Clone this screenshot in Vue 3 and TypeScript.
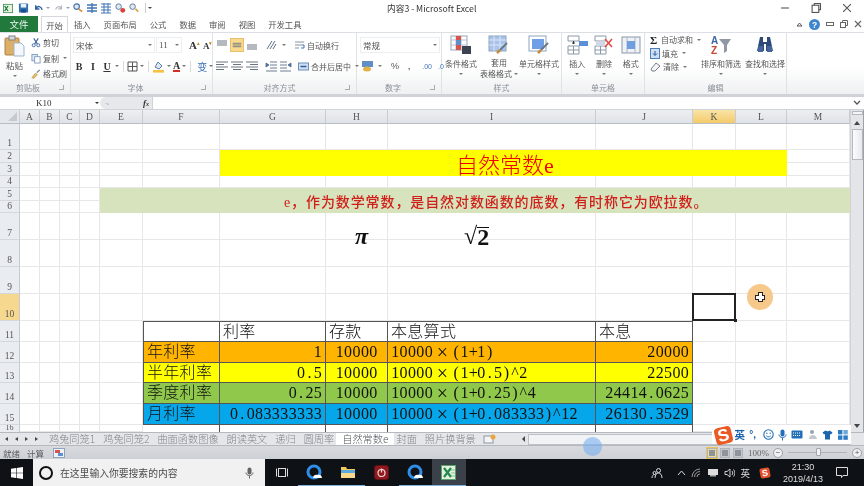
<script setup lang="ts">
const cols = ['A', 'B', 'C', 'D', 'E', 'F', 'G', 'H', 'I', 'J', 'K', 'L', 'M']
const rows = Array.from({ length: 16 }, (_, i) => i + 1)

const tabs = ['插入', '页面布局', '公式', '数据', '审阅', '视图', '开发工具']
const sheets = ['鸡兔同笼1', '鸡兔同笼2', '曲面函数图像', '朗读英文', '递归', '圆周率', '自然常数e', '封面', '照片换背景']

type Cell = { r: number; c: number; text: string; cls: string }
const tableRows = [
  { name: '', bg: 'white', vals: ['利率', '存款', '本息算式', '本息'] },
  { name: '年利率', bg: 'orange', vals: ['1', '10000', '10000×(1+1)', '20000'] },
  { name: '半年利率', bg: 'yellow', vals: ['0.5', '10000', '10000×(1+0.5)^2', '22500'] },
  { name: '季度利率', bg: 'green', vals: ['0.25', '10000', '10000×(1+0.25)^4', '24414.0625'] },
  { name: '月利率', bg: 'blue', vals: ['0.083333333', '10000', '10000×(1+0.083333)^12', '26130.3529'] },
]
const tableCells: Cell[] = []
tableRows.forEach((row, i) => {
  const base = `tc ${row.bg}`
  tableCells.push({ r: 11 + i, c: 6, text: row.name, cls: `${base} left cjk first-col` })
  row.vals.forEach((v, j) => {
    const head = i === 0
    const align = head ? 'left cjk' : ['right', 'center', 'left', 'right'][j]
    tableCells.push({ r: 11 + i, c: 7 + j, text: v, cls: `${base} ${align}` })
  })
})

// SimSun is half-width for every ascii char, so numbers go char by char
function parts(text: string) {
  return /[\u4e00-\u9fff]/.test(text) ? [text] : Array.from(text)
}
function partClass(p: string) {
  return { ch: p.length === 1 && p !== '×', times: p === '×' }
}

const alignTop = ['M2 3h10M2 5h10M2 7h10', 'M2 5h10M2 7h10M2 9h10', 'M2 7h10M2 9h10M2 11h10']
const horizontal = [
  [[1, 13], [1, 9], [1, 13], [1, 9]],
  [[1, 13], [3, 11], [1, 13], [3, 11]],
  [[1, 13], [5, 13], [1, 13], [5, 13]],
]
</script>

<template>
  <div class="excel">
    <!-- title bar -->
    <div class="titlebar">
      <div class="qat">
        <svg width="10" height="11" viewBox="0 0 12 12"><rect x=".5" y="1" width="11" height="10" fill="#e6f1e4" stroke="#3f8f4f" /><path d="M2 3l4 6M6 3L2 9" stroke="#1f7a3a" stroke-width="1.5" /></svg>
        <svg class="save" width="11" height="12" viewBox="0 0 12 12"><rect x="1" y="1" width="10" height="10" rx="1" fill="#2f6fb0" /><rect x="3" y="1.5" width="6" height="4" fill="#e9f0f8" /><rect x="3.5" y="7.5" width="5" height="3.5" fill="#1c4a80" /></svg>
        <svg class="undo" width="11" height="12" viewBox="0 0 12 12"><path d="M3 3v4h4M3 7c2-4 6-3 7 1" fill="none" stroke="#2f5f9a" stroke-width="1.6" /></svg>
        <i class="mini-arrow"></i>
        <svg class="redo" width="10" height="12" viewBox="0 0 12 12"><path d="M9 3v4H5M9 7C7 3 3 4 2 8" fill="none" stroke="#b4bac2" stroke-width="1.5" /></svg>
        <i class="mini-arrow"></i>
        <svg width="12" height="12" viewBox="0 0 13 12"><circle cx="5" cy="4.5" r="3" fill="#dfe9f5" stroke="#3e6da5" stroke-width="1.2" /><path d="M7 7l4 3" stroke="#d28b2f" stroke-width="1.6" /></svg>
        <svg width="12" height="12" viewBox="0 0 12 12"><path d="M1 3h10M1 6h10M1 9h10M6 1v10" stroke="#3f74b5" stroke-width="1.3" /></svg>
        <svg width="12" height="12" viewBox="0 0 12 12"><path d="M1 2h10M1 5h10M1 8h10M1 11h10M4 1v10M8 1v10" stroke="#3f74b5" /></svg>
        <svg width="12" height="12" viewBox="0 0 13 12"><circle cx="5" cy="4.5" r="3" fill="#e3e8ef" stroke="#56789f" /><circle cx="9.5" cy="8.5" r="2.6" fill="#d8423a" /></svg>
        <svg width="12" height="12" viewBox="0 0 13 12"><circle cx="5" cy="4.5" r="3" fill="#e3e8ef" stroke="#56789f" /><path d="M8 7l3 3" stroke="#d9a640" stroke-width="1.8" /></svg>
        <span class="sep"></span>
        <i class="mini-arrow dark"></i>
      </div>
      <div class="doc-title">内容3 - Microsoft Excel</div>
      <div class="win-controls">
        <svg width="10" height="10" viewBox="0 0 9 9"><path d="M1 4.5h7" stroke="#555" /></svg>
        <svg width="10" height="10" viewBox="0 0 9 9"><rect x="1" y="2" width="6" height="6.5" fill="none" stroke="#555" /><path d="M3 2V.5h5.5V6H7" fill="none" stroke="#555" /></svg>
        <svg width="10" height="10" viewBox="0 0 9 9"><path d="M1 1l7 7M8 1L1 8" stroke="#555" /></svg>
      </div>
    </div>

    <!-- ribbon tabs -->
    <div class="tabbar">
      <div class="file-tab">文件</div>
      <div class="tab active">开始</div>
      <div v-for="t in tabs" :key="t" class="tab">{{ t }}</div>
      <div class="doc-controls">
        <svg width="7" height="7" viewBox="0 0 7 7"><path d="M1 5l2.5-3L6 5z" fill="none" stroke="#555" /></svg>
        <svg width="11" height="11" viewBox="0 0 11 11"><circle cx="5.5" cy="5.5" r="5.5" fill="#3d86cf" /><text x="5.5" y="8.5" font-size="8.5" font-weight="700" text-anchor="middle" fill="#fff" font-family="Liberation Sans, sans-serif">?</text></svg>
        <svg width="8" height="6" viewBox="0 0 8 6"><rect x=".5" y="1.5" width="7" height="3" fill="none" stroke="#666" /></svg>
        <svg width="8" height="8" viewBox="0 0 8 8"><rect x=".5" y="2.5" width="5" height="5" fill="#fff" stroke="#666" /><path d="M2.5 2V.5h5v5H6" fill="none" stroke="#666" /></svg>
        <svg width="8" height="8" viewBox="0 0 8 8"><path d="M1 1l6 6M7 1L1 7" stroke="#666" stroke-width="1.2" /></svg>
      </div>
    </div>

    <!-- ribbon -->
    <div class="ribbon">
      <section class="group clipboard">
        <div class="body">
          <div class="big paste">
            <svg width="22" height="22" viewBox="0 0 22 22"><rect x="1" y="3" width="14" height="17" rx="1" fill="#dcae66" stroke="#ad8444" /><rect x="5" y="1" width="6" height="4" fill="#d5d8dd" stroke="#7d8187" /><path d="M10 8h7l3 3v10H10z" fill="#f4f8fc" stroke="#9fb5cf" /></svg>
            <span>粘贴</span>
            <i class="arrow"></i>
          </div>
          <div class="clip-list">
            <div class="small"><svg width="10" height="11" viewBox="0 0 11 11"><path d="M3 1l4 6M8 1L4 7" stroke="#3c66a0" stroke-width="1.2" /><circle cx="3" cy="8.5" r="1.7" fill="none" stroke="#3c66a0" /><circle cx="8" cy="8.5" r="1.7" fill="none" stroke="#3c66a0" /></svg>剪切</div>
            <div class="small"><svg width="10" height="11" viewBox="0 0 11 11"><rect x="1" y="1" width="6" height="7" fill="#dce8f5" stroke="#7d9ac0" /><rect x="4" y="3.5" width="6" height="7" fill="#fff" stroke="#7d9ac0" /></svg>复制<i class="arrow"></i></div>
            <div class="small"><svg width="10" height="11" viewBox="0 0 11 11"><path d="M1 10l4-5 2 2-4 4z" fill="#e7c166" stroke="#a9822e" stroke-width=".6" /><path d="M6 4l3-3 1 1-3 3z" fill="#6d7f97" /></svg>格式刷</div>
          </div>
        </div>
        <div class="label">剪贴板<i class="launcher"></i></div>
      </section>

      <section class="group font">
        <div class="body stack">
          <div class="line">
            <div class="select font-name">宋体<i class="arrow"></i></div>
            <div class="select font-size">11<i class="arrow"></i></div>
            <span class="grow-a">A<sup>▴</sup></span>
            <span class="shrink-a">A<sup>▾</sup></span>
          </div>
          <div class="line format-line">
            <b class="fmt">B</b>
            <em class="fmt">I</em>
            <u class="fmt">U</u><i class="arrow"></i>
            <span class="thin-sep"></span>
            <svg width="11" height="11" viewBox="0 0 11 11"><path d="M1 1h9v9H1zM5.5 1v9M1 5.5h9" fill="none" stroke="#555" /></svg><i class="arrow"></i>
            <span class="thin-sep"></span>
            <svg width="13" height="13" viewBox="0 0 13 13"><path d="M3 7l3-5 4 4-3 3z" fill="#dfe8f2" stroke="#5a7ba6" /><rect x="1" y="10" width="11" height="2.6" fill="#f5c242" /></svg><i class="arrow"></i>
            <span class="color-a">A</span><i class="arrow"></i>
            <span class="thin-sep"></span>
            <span class="phonetic">变</span><i class="arrow"></i>
          </div>
        </div>
        <div class="label">字体<i class="launcher"></i></div>
      </section>

      <section class="group align">
        <div class="body stack">
          <div class="line">
            <svg v-for="(d, i) in alignTop" :key="i" width="14" height="14" viewBox="0 0 14 14" :class="{ picked: i === 1 }">
              <path :d="d" stroke="#6a7480" />
            </svg>
            <svg class="orient" width="14" height="12" viewBox="0 0 14 12"><path d="M2 10l5-8M5 10l5-8M8 10l3-5" stroke="#5d6f88" /></svg><i class="arrow"></i>
            <div class="small wrap"><svg width="11" height="11" viewBox="0 0 11 11"><path d="M1 2h9M1 5h7M1 8h4" stroke="#8a93a0" /><path d="M8 5h2v3H7" fill="none" stroke="#3f74b5" /></svg>自动换行</div>
          </div>
          <div class="line">
            <svg v-for="(h, i) in horizontal" :key="i" width="14" height="12" viewBox="0 0 14 12">
              <line v-for="(l, j) in h" :key="j" :x1="l[0]" :x2="l[1]" :y1="2 + j * 2.5" :y2="2 + j * 2.5" stroke="#6a7480" />
            </svg>
            <svg class="orient" width="13" height="12" viewBox="0 0 13 12"><path d="M5 2h7M5 5h7M5 8h7M1 11h11M4 5L1 3v4z" stroke="#5d6f88" fill="#3f74b5" stroke-width=".9" /></svg>
            <svg width="13" height="12" viewBox="0 0 13 12"><path d="M1 2h7M1 5h7M1 8h7M1 11h11M9 5l3-2v4z" stroke="#5d6f88" fill="#3f74b5" stroke-width=".9" /></svg>
            <div class="small merge"><svg width="11" height="11" viewBox="0 0 11 11"><rect x=".5" y="2" width="10" height="7" fill="#cfe0f3" stroke="#6d8fb8" /><path d="M2.5 5.500h6" stroke="#2a5f9c" stroke-width="1.5" /></svg>合并后居中<i class="arrow"></i></div>
          </div>
        </div>
        <div class="label">对齐方式<i class="launcher"></i></div>
      </section>

      <section class="group number">
        <div class="body stack">
          <div class="line"><div class="select num-format">常规<i class="arrow"></i></div></div>
          <div class="line num-line">
            <svg width="14" height="12" viewBox="0 0 14 12"><rect x="1" y="1" width="11" height="6" fill="#5f8fc6" /><ellipse cx="6" cy="9" rx="4" ry="2.5" fill="#e0b146" /></svg><i class="arrow"></i>
            <span class="pct">%</span>
            <strong>,</strong>
            <span class="dec">.00</span>
            <span class="dec">.0</span>
          </div>
        </div>
        <div class="label">数字<i class="launcher"></i></div>
      </section>

      <section class="group styles">
        <div class="body">
          <div class="big cond">
            <svg width="22" height="20" viewBox="0 0 22 20"><rect x="1" y="1" width="16" height="14" fill="#fff" stroke="#99a6b8" /><path d="M1 5h16M1 10h16M6 1v14M11 1v14" stroke="#b7c1cf" /><rect x="6" y="1" width="5" height="4" fill="#d8544b" /><rect x="6" y="5" width="5" height="5" fill="#5f8fcb" /><rect x="6" y="10" width="5" height="5" fill="#d8544b" /><rect x="12" y="11" width="9" height="8" fill="#3b4350" /></svg>
            <span>条件格式</span>
            <i class="arrow"></i>
          </div>
          <div class="big cond two-line">
            <svg width="22" height="20" viewBox="0 0 22 20"><rect x="1" y="1" width="17" height="15" fill="#a9c3ea" stroke="#8ea3c0" /><path d="M1 5h17M1 10h17M6 1v15M12 1v15" stroke="#dbe6f6" /><path d="M19 8l-7 7" stroke="#6b7887" stroke-width="2" /><path d="M12 15l-3 3" stroke="#c78a3a" stroke-width="2.5" /></svg>
            <span>套用</span>
            <span>表格格式<i class="arrow inline"></i></span>
          </div>
          <div class="big cell-style">
            <svg width="22" height="20" viewBox="0 0 22 20"><rect x="1" y="1" width="17" height="15" fill="#fff" stroke="#8ea3c0" /><rect x="4" y="4" width="12" height="10" fill="#6f9fe6" /><path d="M20 8l-7 7" stroke="#6b7887" stroke-width="2" /><path d="M13 15l-3 3" stroke="#c78a3a" stroke-width="2.5" /></svg>
            <span>单元格样式</span>
            <i class="arrow"></i>
          </div>
        </div>
        <div class="label">样式</div>
      </section>

      <section class="group cells">
        <div class="body">
          <div class="big">
            <svg width="22" height="20" viewBox="0 0 22 20"><path d="M2 1h11v5H2zM2 11h11v8H2zM7.5 11v8M2 15h11" fill="#fff" stroke="#8c98a8" /><path d="M7.5 6v3M6 8h3" stroke="#333" /><rect x="13" y="6" width="9" height="5" fill="#5b8fd6" /></svg>
            <span>插入</span>
            <i class="arrow"></i>
          </div>
          <div class="big">
            <svg width="22" height="20" viewBox="0 0 22 20"><path d="M2 1h11v5H2zM2 11h11v8H2zM7.5 11v8M2 15h11" fill="#fff" stroke="#8c98a8" /><rect x="3" y="6" width="9" height="5" fill="#cfd8e4" /><path d="M12 4l7 8M19 4l-7 8" stroke="#e2483d" stroke-width="1.5" /></svg>
            <span>删除</span>
            <i class="arrow"></i>
          </div>
          <div class="big">
            <svg width="22" height="20" viewBox="0 0 22 20"><rect x="2" y="2" width="18" height="16" fill="#eef2f7" stroke="#8c98a8" /><path d="M7 2v16M15 2v16" stroke="#aab4c2" /><rect x="7" y="6" width="8" height="8" fill="#6f9fe0" /></svg>
            <span>格式</span>
            <i class="arrow"></i>
          </div>
        </div>
        <div class="label">单元格</div>
      </section>

      <section class="group editing">
        <div class="body">
          <div class="edit-list">
            <div class="small"><span class="sigma">Σ</span>自动求和<i class="arrow"></i></div>
            <div class="small"><svg width="10" height="11" viewBox="0 0 10 11"><rect x=".5" y=".5" width="9" height="10" fill="#cfe0f3" stroke="#4d7fbc" /><path d="M5 3v4M3 5.500l2 2 2-2" stroke="#1d4f93" fill="none" /></svg>填充<i class="arrow"></i></div>
            <div class="small"><svg width="11" height="11" viewBox="0 0 11 11"><path d="M1 8l5-6 4 3-5 5H2z" fill="#f4f5f7" stroke="#777f8a" /></svg>清除<i class="arrow"></i></div>
          </div>
          <div class="big sort">
            <svg width="22" height="20" viewBox="0 0 22 20"><text x="1" y="9" font-size="10" font-weight="700" fill="#3a66a8" font-family="Liberation Sans, sans-serif">A</text><text x="1" y="19" font-size="10" font-weight="700" fill="#c2492f" font-family="Liberation Sans, sans-serif">Z</text><path d="M9 4h12l-4 6v6l-3 2v-8z" fill="#8f98a4" /></svg>
            <span>排序和筛选</span>
            <i class="arrow"></i>
          </div>
          <div class="big find">
            <svg width="20" height="20" viewBox="0 0 20 20"><path d="M5 2h3v5h4V2h3l3 14h-7V9H9v7H2z" fill="#2e4a78" /><rect x="3" y="11" width="5" height="6" fill="#43659b" /><rect x="12" y="11" width="5" height="6" fill="#43659b" /></svg>
            <span>查找和选择</span>
            <i class="arrow"></i>
          </div>
        </div>
        <div class="label">编辑</div>
      </section>
    </div>

    <!-- formula bar -->
    <div class="formula">
      <div class="namebox">K10<i class="arrow dark"></i></div>
      <div class="fx-box"><span class="fx-dot">~</span><em>f<small>x</small></em></div>
      <div class="input"></div>
      <svg class="expand" width="8" height="6" viewBox="0 0 8 6"><path d="M1 1l3 3 3-3" fill="none" stroke="#555" stroke-width="1.3" /></svg>
    </div>

    <!-- sheet -->
    <div class="sheet-area">
      <div class="sheet">
        <div class="corner"><i></i></div>
        <div v-for="c in cols" :key="c" class="col-head" :class="{ current: c === 'K' }">{{ c }}</div>
        <template v-for="r in rows" :key="r">
          <div class="row-head" :class="{ current: r === 10, cut: r === 16 }" :style="{ gridRow: r + 1 }">{{ r }}</div>
          <div v-for="(c, i) in cols" :key="c" class="cell" :style="{ gridRow: r + 1, gridColumn: i + 2 }"></div>
        </template>

        <div class="title-cell">自然常数e</div>
        <div class="desc-cell">e，作为数学常数，是自然对数函数的底数，有时称它为欧拉数。</div>
        <div class="pi">π</div>
        <div class="root">√<span>2</span></div>

        <div
          v-for="t in tableCells"
          :key="`${t.r}-${t.c}`"
          :class="t.cls"
          :style="{ gridRow: t.r + 1, gridColumn: t.c + 1 }"
        ><span v-for="(p, i) in parts(t.text)" :key="i" :class="partClass(p)">{{ p }}</span></div>
        <div v-for="c in 5" :key="c" class="tc tail" :style="{ gridRow: 17, gridColumn: c + 6 }"></div>

        <div class="selected"><i></i></div>
      </div>
      <div class="vscroll">
        <span class="splitter"></span>
        <span class="up"></span>
        <span class="thumb"></span>
        <span class="spacer"></span>
        <span class="down"></span>
      </div>
    </div>

    <!-- sheet tabs -->
    <div class="sheetbar">
      <div class="nav-icons">
        <i class="first"></i><i class="prev"></i><i class="next"></i><i class="last"></i>
      </div>
      <div v-for="s in sheets" :key="s" class="sheet-tab" :class="{ on: s === '自然常数e' }">{{ s }}</div>
      <svg class="new-sheet" width="13" height="10" viewBox="0 0 13 10"><rect x="1" y="2" width="9" height="7" fill="#f2f4f7" stroke="#8d97a4" /><circle cx="10" cy="3" r="2.5" fill="#e7a63e" /></svg>
      <div class="hscroll">
        <span class="hs-left"></span>
        <span class="hs-track"></span>
      </div>
    </div>

    <!-- status bar -->
    <div class="statusbar">
      <span>就绪</span>
      <span>计算</span>
      <svg width="12" height="10" viewBox="0 0 12 10"><rect x=".5" y=".5" width="11" height="9" fill="#eef3f9" stroke="#8fa3bd" /><rect x="2" y="2" width="5" height="3" fill="#d8544b" /><rect x="5" y="5" width="5" height="3" fill="#5f8fcb" /></svg>
      <div class="status-right">
        <span class="view on"><i></i></span>
        <span class="view"><i></i></span>
        <span class="view"><i></i></span>
        <span class="zoom-text">100%</span>
        <span class="zoom-btn">−</span>
        <span class="slider"><i></i></span>
        <span class="zoom-btn">+</span>
      </div>
    </div>

    <!-- taskbar -->
    <div class="taskbar">
      <div class="start">
        <svg width="12" height="12" viewBox="0 0 12 12"><path d="M0 1.700l5-.7v4.700H0zM5.600.9L12 0v5.700H5.600zM0 6.300h5V11l-5-.7zM5.600 6.300H12V12l-6.400-.9z" fill="#fff" /></svg>
      </div>
      <div class="search">
        <span class="cortana"></span>
        <span class="search-text">在这里输入你要搜索的内容</span>
        <svg width="9" height="12" viewBox="0 0 9 12"><rect x="2.5" y=".5" width="4" height="7" rx="2" fill="#666" /><path d="M1 5.500c0 4 7 4 7 0M4.500 9v2.500" fill="none" stroke="#666" /></svg>
      </div>
      <div class="task-view">
        <svg width="12" height="11" viewBox="0 0 12 11"><rect x="2.5" y="1.500" width="7" height="8" fill="none" stroke="#ddd" /><path d="M.5 1.500v8M11.500 1.500v8" stroke="#ddd" /></svg>
      </div>
      <div class="apps">
        <div class="app open"><svg width="17" height="17" viewBox="0 0 17 17"><circle cx="8" cy="8" r="6" fill="none" stroke="#2f8fe8" stroke-width="3" /><path d="M7 14c0-3 3-4 5-3 2-1 4 1 4 3z" fill="#fff" /></svg></div>
        <div class="app open"><svg width="16" height="14" viewBox="0 0 16 14"><path d="M1 2h5l1 2h8v9H1z" fill="#f2c75c" /><rect x="1" y="5" width="14" height="3" fill="#5aa9dc" /><rect x="1" y="8" width="14" height="5" fill="#f6d98a" /></svg></div>
        <div class="app"><svg width="15" height="15" viewBox="0 0 15 15"><rect x=".5" y=".5" width="14" height="14" rx="2.5" fill="#8e1a20" stroke="#5e1216" /><circle cx="7.5" cy="8" r="3.5" fill="none" stroke="#f6d9d9" stroke-width="1.2" /><path d="M7.500 3.500v4" stroke="#f6d9d9" stroke-width="1.2" /></svg></div>
        <div class="app open"><svg width="17" height="17" viewBox="0 0 17 17"><circle cx="8" cy="8" r="6" fill="none" stroke="#2f8fe8" stroke-width="3" /><path d="M7 14c0-3 3-4 5-3 2-1 4 1 4 3z" fill="#fff" /></svg></div>
        <div class="app open current"><svg width="15" height="15" viewBox="0 0 15 15"><rect x=".5" y=".5" width="14" height="14" fill="#e4efe2" stroke="#5aa06a" /><path d="M3 3l7 9M10 3l-7 9" stroke="#1f8a45" stroke-width="2.2" /><path d="M10 5h4M10 8h4M10 11h4" stroke="#8bbd96" /></svg></div>
      </div>
      <div class="tray">
        <svg width="12" height="12" viewBox="0 0 12 12"><circle cx="7.5" cy="3.5" r="2" fill="none" stroke="#ddd" /><circle cx="3.5" cy="6" r="1.5" fill="none" stroke="#ddd" /><path d="M4 11c0-3 1.500-5 3.500-5s3.500 2 3.500 5M1 11c0-2 1-3.500 2.500-3.500" fill="none" stroke="#ddd" /></svg>
        <svg class="caret-up" width="9" height="6" viewBox="0 0 9 6"><path d="M1 5l3.500-4L8 5" fill="none" stroke="#ddd" /></svg>
        <svg width="11" height="10" viewBox="0 0 11 10"><path d="M1 9a8 8 0 0 1 8-8M3.500 9A5.500 5.500 0 0 1 9 3.500M6 9a3 3 0 0 1 3-3" fill="none" stroke="#999" /></svg>
        <svg width="12" height="9" viewBox="0 0 12 9"><rect x="1" y="1" width="10" height="6" fill="#ddd" /><rect x="3" y="7" width="6" height="1.5" fill="#aaa" /></svg>
        <svg width="11" height="10" viewBox="0 0 11 10"><path d="M1 3.500h2L6 1v8L3 6.500H1z" fill="none" stroke="#ccc" /><path d="M8 3a3 3 0 0 1 0 4M9.500 1.500a5 5 0 0 1 0 7" fill="none" stroke="#ccc" /></svg>
        <span class="ime">英</span>
        <span class="tray-s">S</span>
        <div class="clock"><span>21:30</span><span>2019/4/13</span></div>
        <svg class="notify" width="12" height="11" viewBox="0 0 12 11"><path d="M.5.500h11v8H7L5.500 10.500V8.500h-5z" fill="none" stroke="#ddd" /></svg>
      </div>
    </div>

    <!-- overlays -->
    <div class="pointer"><span class="cross"></span></div>
    <div class="click-dot"></div>
    <div class="sogou">
      <span class="sogou-logo">S</span>
      <span class="sogou-lang">英</span>
      <span class="sogou-punc">°,</span>
      <svg width="11" height="11" viewBox="0 0 11 11"><circle cx="5.5" cy="5.5" r="4.7" fill="none" stroke="#2470b8" stroke-width="1.1" /><circle cx="3.8" cy="4.3" r=".7" fill="#2470b8" /><circle cx="7.2" cy="4.3" r=".7" fill="#2470b8" /><path d="M3.300 6.800c1 1.400 3.400 1.400 4.400 0" fill="none" stroke="#2470b8" /></svg>
      <svg width="9" height="12" viewBox="0 0 9 12"><rect x="2.5" y=".5" width="4" height="7" rx="2" fill="#2470b8" /><path d="M1 5.500c0 4 7 4 7 0M4.500 9v2.500" fill="none" stroke="#2470b8" /></svg>
      <svg width="12" height="9" viewBox="0 0 12 9"><rect x=".5" y=".5" width="11" height="8" rx="1" fill="#2470b8" /><path d="M2 3h8M2 5.500h8" stroke="#fff" stroke-dasharray="1 1" /></svg>
      <svg width="10" height="11" viewBox="0 0 10 11"><circle cx="4" cy="3" r="2" fill="#9aa3ad" /><path d="M1 10c0-3 2-4 4-4s3 1 4 4z" fill="#c2c8cf" /></svg>
      <svg width="11" height="10" viewBox="0 0 11 10"><path d="M3.500.5L.5 2.500l1.500 2 1-.5V9.500h5V4l1 .5 1.500-2-3-2c-.5 1-3 1-4 0z" fill="#1c64ad" /></svg>
      <svg width="10" height="10" viewBox="0 0 10 10"><rect width="4.400" height="4.400" fill="#2c7cc4" /><rect x="5.400" width="4.400" height="4.400" fill="#6fa9dc" /><rect y="5.400" width="4.400" height="4.400" fill="#2c7cc4" /><rect x="5.400" y="5.400" width="4.400" height="4.400" fill="#2c7cc4" /></svg>
    </div>
  </div>
</template>

<style scoped>
.excel {
  position: relative;
  width: 864px;
  height: 486px;
  overflow: hidden;
  background: #cfd2d7;
  color: #555;
  font-family: "Noto Sans CJK SC", "Liberation Sans", sans-serif;
  font-size: 8px;
  display: flex;
  flex-direction: column;
  filter: blur(.35px);
}

/* title bar */
.titlebar {
  height: 16px;
  display: flex;
  align-items: center;
  background: #fff;
}
.qat {
  width: 300px;
  display: flex;
  align-items: center;
  gap: 2px;
  padding-left: 3px;
  box-sizing: border-box;
}
.save { margin-left: 3px; }
.undo { margin-left: 2px; }
.redo { margin-left: 2px; }
.sep { width: 1px; height: 10px; background: #c8ccd2; margin-left: 3px; }
.mini-arrow {
  width: 0;
  height: 0;
  border: 2px solid transparent;
  border-top: 2px solid #9aa0a8;
  margin-top: 2px;
}
.mini-arrow.dark { border-top-color: #444; }
.doc-title {
  margin-left: 87px;
  white-space: nowrap;
  font-size: 8.7px;
  color: #333;
}
.win-controls {
  margin-left: auto;
  display: flex;
  gap: 21px;
  padding-right: 12px;
}

/* ribbon tabs */
.tabbar {
  height: 16px;
  display: flex;
  align-items: stretch;
  background: #fff;
}
.file-tab {
  width: 38px;
  background: #217a3c;
  color: #e9f5ea;
  font-size: 9.5px;
  display: flex;
  align-items: center;
  justify-content: center;
}
.tab {
  margin-right: 13px;
  display: flex;
  align-items: center;
  font-size: 8.3px;
  white-space: nowrap;
  color: #555;
}
.tab.active {
  margin-left: 3px;
  margin-right: 6px;
  width: 27px;
  justify-content: center;
  border: 1px solid #d4d7db;
  border-bottom: 0;
  box-sizing: border-box;
  background: #fff;
}
.doc-controls {
  margin-left: auto;
  display: flex;
  align-items: center;
  gap: 6px;
  padding-right: 2px;
}

/* ribbon */
.ribbon {
  height: 62px;
  display: flex;
  background: linear-gradient(#fff 55%, #eff0f2);
  border-top: 1px solid #dcdfe3;
  box-sizing: border-box;
}
.group {
  display: flex;
  flex-direction: column;
  box-sizing: border-box;
  border-right: 1px solid #e0e2e5;
}
.clipboard { width: 71px; }
.font { width: 142px; }
.align { width: 144px; }
.number { width: 85px; }
.styles { width: 120px; }
.cells { width: 83px; }
.editing { width: 142px; }
.clipboard .label { padding-right: 14px; }
.font .label { padding-right: 12px; }
.align .label { padding-right: 10px; }
.number .label { padding-right: 12px; }
.body { flex: 1; display: flex; min-height: 0; }
.stack { flex-direction: column; gap: 5px; padding: 4px 2px 0; box-sizing: border-box; }
.line { display: flex; align-items: center; height: 16px; gap: 1px; }
.line svg { flex: none; }
.label {
  position: relative;
  height: 12px;
  line-height: 11px;
  text-align: center;
  color: #8a8f96;
  font-size: 8px;
}
.launcher {
  position: absolute;
  right: 6px;
  top: 3px;
  width: 4px;
  height: 4px;
  border-right: 1px solid #aaa;
  border-bottom: 1px solid #aaa;
}
.arrow {
  display: inline-block;
  width: 0;
  height: 0;
  margin-left: 2px;
  border: 2px solid transparent;
  border-top: 2.5px solid #777;
  border-bottom: 0;
  vertical-align: middle;
  flex: none;
}
.arrow.dark { border-top-color: #333; }
.big {
  display: flex;
  flex-direction: column;
  align-items: center;
  line-height: 11px;
  white-space: nowrap;
  padding-top: 2px;
}
.big svg { margin-bottom: 3px; }
.big .arrow { margin: 4px 0 0; }
.big .arrow.inline { margin: 0 0 0 2px; }
.small {
  display: flex;
  align-items: center;
  gap: 2px;
  white-space: nowrap;
  height: 14px;
}
.paste { width: 29px; font-size: 8.5px; }
.clip-list { padding: 2.5px 0 0 2px; display: flex; flex-direction: column; gap: 1.5px; }
.select {
  display: flex;
  align-items: center;
  justify-content: space-between;
  background: #fff;
  border: 1px solid #eceef0;
  box-sizing: border-box;
  height: 16px;
  padding: 0 2px;
  font-size: 8.5px;
  flex: none;
}
.font-name { width: 82px; }
.font-size { width: 26px; font-family: "Liberation Serif", serif; font-size: 9px; }
.grow-a, .shrink-a { font: 700 11px "Liberation Serif", serif; color: #333; margin-left: 6px; }
.shrink-a { font-size: 9px; margin-left: 2px; }
sup { font-size: 5px; color: #c08a2a; vertical-align: 4px; }
.fmt { flex: none; width: 12px; text-align: center; font: 700 10px "Liberation Serif", serif; color: #333; }
.format-line { gap: 2px; }
.format-line .arrow { margin-left: 0; }
.thin-sep { width: 1px; height: 11px; background: #d8dadd; margin: 0 1.5px; flex: none; }
.color-a {
  flex: none;
  font: 700 10px "Liberation Serif", serif;
  color: #333;
  border-bottom: 2px solid #d62b25;
  line-height: 9px;
}
.phonetic { color: #3f74b5; font-size: 10px; flex: none; margin-left: 3px; }
.picked { background: #f8d98d; border: 1px solid #e8c06a; box-sizing: border-box; }
.orient { margin-left: 5px; }
.wrap { margin-left: 7px; }
.merge { margin-left: 5px; }
.num-format { width: 80px; margin-left: 1px; }
.num-line { padding-left: 2px; color: #555; font-family: "Liberation Sans", sans-serif; }
.num-line .pct { margin-left: 8px; font-size: 9px; }
.num-line strong { margin: 0 11px 0 8px; }
.dec { color: #3f74b5; font-size: 7px; margin-right: 5px; }
.cond { width: 38px; }
.cell-style { width: 42px; }
.two-line { line-height: 10.5px; }
.cells .body { padding-left: 2px; }
.cells .big { width: 27px; }
.edit-list { display: flex; flex-direction: column; padding: 0 0 0 5px; width: 56px; flex: none; box-sizing: border-box; }
.edit-list .small { height: 13.5px; }
.sigma { font: 700 11px "Liberation Serif", serif; color: #222; width: 10px; }
.sort, .find { width: 40px; }
.find { margin-left: 4px; }

/* formula bar */
.formula {
  margin-top: 3px;
  height: 12px;
  display: flex;
  align-items: stretch;
  background: #fff;
}
.namebox {
  width: 100px;
  display: flex;
  align-items: center;
  padding-left: 36px;
  box-sizing: border-box;
  gap: 41px;
  font: 9px "Liberation Serif", serif;
  color: #333;
}
.fx-box {
  width: 52px;
  background: #e6e8eb;
  border-radius: 6px 0 0 6px;
  display: flex;
  align-items: center;
  justify-content: space-between;
  padding: 0 3px 0 5px;
  box-sizing: border-box;
  color: #aaa;
}
.fx-box em { font: italic 700 9px "Liberation Serif", serif; color: #333; }
.fx-box small { font-size: 6px; }
.input { flex: 1; border-left: 1px solid #cfd2d6; }
.expand { align-self: center; margin: 0 3px; }

/* sheet */
.sheet-area {
  margin-top: 1px;
  height: 322px;
  display: flex;
}
.sheet {
  width: 851px;
  height: 322px;
  display: grid;
  grid-template-columns: 20px 20px 20px 20px 20px 43px 77px 106px 62px 208px 97px 43px 51px 63px;
  grid-template-rows: 14px 26px 13px 13px 12px 13px 12px 27px 27px 27px 27px 21px 21px 20px 21px 21px 7px;
  overflow: hidden;
  font-family: "Liberation Serif", "Noto Sans CJK SC", serif;
}
.corner {
  background: #e4e7eb;
  border-right: 1px solid #c9cdd3;
  border-bottom: 1px solid #b9bdc4;
  display: flex;
  align-items: flex-end;
  justify-content: flex-end;
  box-sizing: border-box;
  padding: 2px;
}
.corner i {
  width: 0;
  height: 0;
  border-left: 9px solid transparent;
  border-bottom: 9px solid #c6cad0;
}
.col-head {
  background: linear-gradient(#edeff2, #dfe2e7);
  border-right: 1px solid #c9cdd3;
  border-bottom: 1px solid #b9bdc4;
  box-sizing: border-box;
  display: flex;
  align-items: center;
  justify-content: center;
  font-size: 9.5px;
  color: #555;
}
.col-head.current { background: linear-gradient(#f9e4a6, #f4cb6c); color: #555; }
.row-head {
  grid-column: 1;
  background: #e9ecf0;
  border-right: 1px solid #c6cad0;
  border-bottom: 1px solid #d4d7dc;
  box-sizing: border-box;
  display: flex;
  align-items: flex-end;
  justify-content: center;
  font-size: 9.5px;
  line-height: 11px;
  color: #555;
  overflow: hidden;
}
.row-head.cut { align-items: flex-start; font-size: 8px; line-height: 6px; border-bottom: 0; }
.row-head.current { background: #f6d88e; }
.cell {
  border-right: 1px solid #e6e7e9;
  border-bottom: 1px solid #e6e7e9;
  box-sizing: border-box;
  background: #fff;
}
.title-cell {
  grid-row: 3 / 5;
  grid-column: 8 / 14;
  background: #ffff00;
  color: #f00000;
  font-size: 22px;
  font-weight: 300;
  display: flex;
  align-items: center;
  justify-content: center;
  padding-left: 3px;
}
.desc-cell {
  grid-row: 6 / 8;
  grid-column: 6 / 15;
  background: #d7e3bc;
  color: #d0201c;
  font-size: 14px;
  letter-spacing: .9px;
  font-weight: 500;
  white-space: nowrap;
  display: flex;
  align-items: center;
  padding-left: 184px;
}
.pi {
  grid-row: 8;
  grid-column: 9;
  font: italic 700 24px "Liberation Serif", serif;
  color: #111;
  display: flex;
  align-items: center;
  padding: 20px 0 0 29px;
}
.root {
  grid-row: 8;
  grid-column: 10;
  font: 400 24px "Liberation Serif", serif;
  color: #111;
  display: flex;
  align-items: center;
  padding: 20px 0 0 76px;
}
.root span { border-top: 1.5px solid #111; line-height: 19px; font-weight: 700; }
.tc {
  box-sizing: border-box;
  border-right: 1px solid #555;
  border-bottom: 1px solid #555;
  padding: 0 3px;
  display: flex;
  align-items: center;
  font-size: 16px;
  line-height: 16px;
  color: #111;
  white-space: nowrap;
  font-family: "Liberation Serif", "Noto Sans CJK SC", serif;
}
.tc.cjk { font-weight: 300; letter-spacing: .3px; }
.first-col { border-left: 1px solid #555; }
.tc.white { background: #fff; border-top: 1px solid #555; }
.tc.orange { background: #ffb500; }
.tc.yellow { background: #ffff00; }
.tc.green { background: #8fc84b; }
.tc.blue { background: #05a6ea; }
.tc.left { justify-content: flex-start; }
.tc.right { justify-content: flex-end; }
.tc.center { justify-content: center; }
.tc.tail { border-bottom: 0; background: #fff; }
.ch { width: 8.4px; text-align: center; flex: none; }
.times { width: 19px; text-align: center; flex: none; font-size: 20px; }
.selected {
  grid-row: 11;
  grid-column: 12;
  border: 2px solid #222;
  margin: -1px 0 0 -1px;
  position: relative;
}
.selected i {
  position: absolute;
  right: -3px;
  bottom: -3px;
  width: 3px;
  height: 3px;
  background: #222;
}
.vscroll {
  width: 13px;
  display: flex;
  flex-direction: column;
  align-items: center;
  background: #e3e5e9;
  border-right: 1px solid #9da2a9;
  box-sizing: border-box;
}
.splitter { width: 11px; height: 4px; background: #f3f4f6; border: 1px solid #b5b9bf; margin-top: 1px; box-sizing: border-box; }
.up { margin-top: 6px; width: 0; height: 0; border: 3px solid transparent; border-bottom: 4px solid #444; border-top: 0; }
.thumb { width: 11px; height: 31px; margin-top: 4px; background: linear-gradient(90deg, #fbfcfd, #e6e8ec); border: 1px solid #b5b9bf; box-sizing: border-box; }
.spacer { flex: 1; }
.down { margin-bottom: 4px; width: 0; height: 0; border: 3px solid transparent; border-top: 4px solid #444; border-bottom: 0; }

/* sheet tabs */
.sheetbar {
  height: 13px;
  display: flex;
  align-items: center;
  background: #e4e6ea;
  border-top: 1px solid #b5b8be;
  box-sizing: border-box;
  font-family: "Noto Sans CJK SC", sans-serif;
}
.nav-icons {
  width: 45px;
  flex: none;
  display: flex;
  align-items: center;
  gap: 7px;
  padding-left: 5px;
  box-sizing: border-box;
}
.nav-icons i {
  width: 0;
  height: 0;
  border: 2.5px solid transparent;
  border-left: 0;
  border-right: 3px solid #444;
}
.nav-icons .next, .nav-icons .last { border-right: 0; border-left: 3px solid #444; }
.sheet-tab {
  padding: 0 4px;
  font-size: 10.2px;
  line-height: 12px;
  color: #808489;
  white-space: nowrap;
  flex: none;
  font-weight: 300;
}
.sheet-tab.on { background: #fff; color: #55595e; margin: 0 -2px; padding: 0 6px; }
.new-sheet { margin-left: 3px; flex: none; }
.hscroll { flex: 1; display: flex; align-items: center; height: 100%; margin-left: 26px; gap: 3px; }
.hs-left { width: 0; height: 0; border: 3px solid transparent; border-left: 0; border-right: 3px solid #444; }
.hs-track { flex: 1; height: 9px; background: #f2f3f5; border: 1px solid #bcc0c6; margin-right: 13px; }

/* status bar */
.statusbar {
  height: 14px;
  display: flex;
  align-items: center;
  gap: 7px;
  padding-left: 3px;
  background: linear-gradient(#d8dade, #cdd0d5);
  border-top: 1px solid #b5b8be;
  box-sizing: border-box;
  color: #5a5e63;
  font-size: 8.5px;
}
.statusbar > svg { margin-left: 2px; }
.status-right {
  margin-left: auto;
  display: flex;
  align-items: center;
  gap: 3px;
  padding-right: 2px;
}
.view { width: 10px; height: 10px; display: flex; padding: 1px; box-sizing: border-box; background: #c5c8cd; border: 1px solid #b0b4ba; }
.view i { flex: 1; background: #8e949c; }
.view.on { outline: 1px solid #e8c45a; background: #eadca8; }
.zoom-text { margin: 0 1px 0 2px; font: 9px "Liberation Serif", serif; color: #666; }
.zoom-btn {
  width: 10px;
  height: 10px;
  border-radius: 50%;
  background: #eff0f2;
  border: 1px solid #9ca1a8;
  box-sizing: border-box;
  text-align: center;
  font: 8px/8px "Liberation Sans", sans-serif;
  color: #555;
}
.slider { width: 59px; height: 1px; background: #b0b4ba; position: relative; margin: 0 2px; display: block; }
.slider i { position: absolute; left: 28px; top: -4px; width: 5px; height: 8px; background: #f1f2f4; border: 1px solid #a0a5ab; border-radius: 1px; box-sizing: border-box; }

/* taskbar */
.taskbar {
  height: 27px;
  display: flex;
  align-items: stretch;
  background: #0e1216;
  color: #ddd;
}
.start { width: 33px; display: flex; align-items: center; justify-content: center; }
.search {
  width: 232px;
  background: #f1f1f1;
  display: flex;
  align-items: center;
  padding: 0 11px 0 6px;
  box-sizing: border-box;
}
.cortana { width: 14px; height: 14px; border: 2px solid #111; border-radius: 50%; box-sizing: border-box; }
.search-text { margin-left: 7px; font-size: 9.8px; color: #4a4a4a; flex: 1; white-space: nowrap; }
.task-view { width: 33px; display: flex; align-items: center; justify-content: center; }
.apps { display: flex; }
.app {
  width: 33.5px;
  display: flex;
  align-items: center;
  justify-content: center;
  box-sizing: border-box;
  border-bottom: 1.5px solid transparent;
}
.app.open { border-bottom-color: #7fb4dc; }
.app.current { background: #3a4148; }
.tray {
  margin-left: auto;
  display: flex;
  align-items: center;
  gap: 5px;
  padding-right: 16px;
}
.caret-up { margin-left: 9px; }
.ime { font-size: 9.5px; color: #ddd; }
.tray-s {
  width: 10px;
  height: 10px;
  margin-left: 5px;
  background: #e2502a;
  border-radius: 2px;
  color: #fff;
  font: 700 9px/10px "Liberation Sans", sans-serif;
  text-align: center;
  transform: rotate(-10deg);
}
.clock {
  display: flex;
  flex-direction: column;
  align-items: center;
  margin-left: 3px;
  width: 50px;
  font: 9px/12px "Liberation Sans", sans-serif;
  color: #ddd;
}
.notify { margin-left: 3px; }

/* overlays */
.pointer {
  position: absolute;
  left: 747px;
  top: 284px;
  width: 26px;
  height: 26px;
  border-radius: 50%;
  background: #f6c88a;
  display: flex;
  align-items: center;
  justify-content: center;
}
.cross {
  width: 10px;
  height: 10px;
  background:
    linear-gradient(#fff, #fff) center / 3px 8px no-repeat,
    linear-gradient(#fff, #fff) center / 8px 3px no-repeat,
    linear-gradient(#222, #222) center / 5px 10px no-repeat,
    linear-gradient(#222, #222) center / 10px 5px no-repeat;
}
.click-dot {
  position: absolute;
  left: 583px;
  top: 437px;
  width: 19px;
  height: 19px;
  border-radius: 50%;
  background: rgba(120, 175, 240, .6);
}
.sogou {
  position: absolute;
  left: 712px;
  top: 425px;
  width: 139px;
  height: 19px;
  background: #fff;
  display: flex;
  align-items: center;
  gap: 4.4px;
  padding-left: 2px;
  box-sizing: border-box;
}
.sogou-logo {
  width: 17px;
  height: 17px;
  border-radius: 4px;
  background: #ea5a25;
  color: #fff;
  font: 700 17px/17px "Liberation Sans", sans-serif;
  text-align: center;
  transform: rotate(-14deg);
  margin: 1px -2px 0 1px;
}
.sogou-lang { color: #1c64ad; font-size: 10.5px; font-weight: 700; }
.sogou-punc { color: #1c64ad; font: 700 10px "Liberation Sans", sans-serif; width: 9px; }
</style>

<style>
body { background: #fff; }
</style>
